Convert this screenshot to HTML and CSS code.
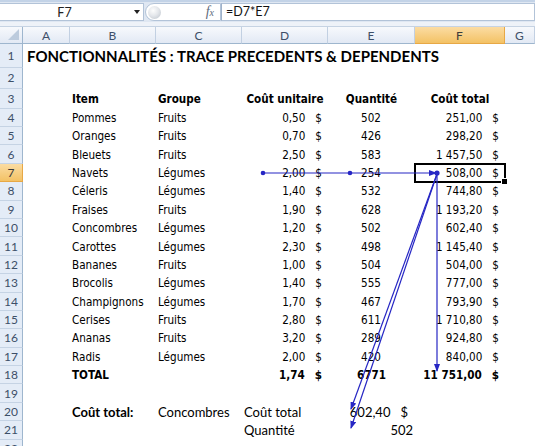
FILE: index.html
```html
<!DOCTYPE html>
<html lang="fr">
<head>
    <meta charset="UTF-8">
    <title>Trace precedents & dependents</title>
    <link rel="stylesheet" href="styles.css">
</head>
<body>

<!-- Formula bar -->
<div class="formula-bar">
    <div class="name-box"><span class="name">F7</span><span class="drop"></span></div>
    <div class="fx-box"><span class="knob"></span><span class="fx">f<span class="fx-x">x</span></span></div>
    <div class="formula">=D7*E7</div>
</div>

<div class="sheet">
    <div class="row head">
        <div class="corner"></div>
        <div class="ch">A</div>
        <div class="ch">B</div>
        <div class="ch">C</div>
        <div class="ch">D</div>
        <div class="ch">E</div>
        <div class="ch sel">F</div>
        <div class="ch">G</div>
    </div>

    <div class="row r1">
        <div class="rh">1</div>
        <div class="title">FONCTIONNALITÉS : TRACE PRECEDENTS &amp; DEPENDENTS</div>
    </div>
    <div class="row r2"><div class="rh">2</div></div>

    <div class="row r3 bold">
        <div class="rh">3</div>
        <div class="c"></div>
        <div class="c">Item</div>
        <div class="c">Groupe</div>
        <div class="c center">Coût unitaire</div>
        <div class="c center">Quantité</div>
        <div class="c center">Coût total</div>
    </div>

    <div class="row"><div class="rh">4</div><div class="c"></div><div class="c">Pommes</div><div class="c">Fruits</div><div class="c money">0,50<span>$</span></div><div class="c qty">502</div><div class="c money">251,00<span>$</span></div></div>
    <div class="row"><div class="rh">5</div><div class="c"></div><div class="c">Oranges</div><div class="c">Fruits</div><div class="c money">0,70<span>$</span></div><div class="c qty">426</div><div class="c money">298,20<span>$</span></div></div>
    <div class="row"><div class="rh">6</div><div class="c"></div><div class="c">Bleuets</div><div class="c">Fruits</div><div class="c money">2,50<span>$</span></div><div class="c qty">583</div><div class="c money">1 457,50<span>$</span></div></div>
    <div class="row"><div class="rh sel">7</div><div class="c"></div><div class="c">Navets</div><div class="c">Légumes</div><div class="c money">2,00<span>$</span></div><div class="c qty">254</div><div class="c money active">508,00<span>$</span></div></div>
    <div class="row"><div class="rh">8</div><div class="c"></div><div class="c">Céleris</div><div class="c">Légumes</div><div class="c money">1,40<span>$</span></div><div class="c qty">532</div><div class="c money">744,80<span>$</span></div></div>
    <div class="row"><div class="rh">9</div><div class="c"></div><div class="c">Fraises</div><div class="c">Fruits</div><div class="c money">1,90<span>$</span></div><div class="c qty">628</div><div class="c money">1 193,20<span>$</span></div></div>
    <div class="row"><div class="rh">10</div><div class="c"></div><div class="c">Concombres</div><div class="c">Légumes</div><div class="c money">1,20<span>$</span></div><div class="c qty">502</div><div class="c money">602,40<span>$</span></div></div>
    <div class="row"><div class="rh">11</div><div class="c"></div><div class="c">Carottes</div><div class="c">Légumes</div><div class="c money">2,30<span>$</span></div><div class="c qty">498</div><div class="c money">1 145,40<span>$</span></div></div>
    <div class="row"><div class="rh">12</div><div class="c"></div><div class="c">Bananes</div><div class="c">Fruits</div><div class="c money">1,00<span>$</span></div><div class="c qty">504</div><div class="c money">504,00<span>$</span></div></div>
    <div class="row"><div class="rh">13</div><div class="c"></div><div class="c">Brocolis</div><div class="c">Légumes</div><div class="c money">1,40<span>$</span></div><div class="c qty">555</div><div class="c money">777,00<span>$</span></div></div>
    <div class="row"><div class="rh">14</div><div class="c"></div><div class="c">Champignons</div><div class="c">Légumes</div><div class="c money">1,70<span>$</span></div><div class="c qty">467</div><div class="c money">793,90<span>$</span></div></div>
    <div class="row"><div class="rh">15</div><div class="c"></div><div class="c">Cerises</div><div class="c">Fruits</div><div class="c money">2,80<span>$</span></div><div class="c qty">611</div><div class="c money">1 710,80<span>$</span></div></div>
    <div class="row"><div class="rh">16</div><div class="c"></div><div class="c">Ananas</div><div class="c">Fruits</div><div class="c money">3,20<span>$</span></div><div class="c qty">289</div><div class="c money">924,80<span>$</span></div></div>
    <div class="row"><div class="rh">17</div><div class="c"></div><div class="c">Radis</div><div class="c">Légumes</div><div class="c money">2,00<span>$</span></div><div class="c qty">420</div><div class="c money">840,00<span>$</span></div></div>

    <div class="row bold">
        <div class="rh">18</div><div class="c"></div><div class="c">TOTAL</div><div class="c"></div>
        <div class="c money">1,74<span>$</span></div><div class="c qty total-qty">6771</div><div class="c money">11 751,00<span>$</span></div>
    </div>

    <div class="row"><div class="rh">19</div></div>

    <div class="row calibri">
        <div class="rh">20</div><div class="c"></div><div class="c strong">Coût total:</div><div class="c">Concombres</div>
        <div class="c">Coût total</div><div class="c money sum">602,40<span>$</span></div>
    </div>
    <div class="row calibri">
        <div class="rh">21</div><div class="c"></div><div class="c"></div><div class="c"></div>
        <div class="c">Quantité</div><div class="c money sum-qty">502</div>
    </div>
    <div class="row"><div class="rh">22</div></div>
</div>

<!-- Tracer arrows drawn over the cells -->
<svg class="tracers" width="535" height="446" viewBox="0 0 535 446">
    <defs>
        <marker id="head" markerUnits="userSpaceOnUse" markerWidth="8" markerHeight="6" refX="7" refY="3" orient="auto">
            <path d="M0,0 L8,3 L0,6 Z" fill="#2626c4"/>
        </marker>
    </defs>
    <g stroke="#2626c4" stroke-width="1.2" fill="none">
        <line x1="263" y1="173" x2="436" y2="173" marker-end="url(#head)"/>
        <line x1="437" y1="173" x2="437" y2="371" marker-end="url(#head)"/>
        <line x1="437" y1="174" x2="351" y2="409" marker-end="url(#head)"/>
        <line x1="437" y1="174" x2="351" y2="428" marker-end="url(#head)"/>
    </g>
    <g fill="#2626c4">
        <circle cx="263" cy="173" r="2.3"/>
        <circle cx="350" cy="173" r="2.3"/>
        <circle cx="437" cy="173" r="2.6"/>
    </g>
</svg>

</body>
</html>
```

FILE: styles.css
```css
body {
    margin: 0;
    background-color: #fff;
    font-family: "DejaVu Sans Condensed", "DejaVu Sans", sans-serif;
    font-size: 11.6px;
    color: #000;
    width: 535px;
    height: 446px;
    overflow: hidden;
    position: relative;
}

/* formula bar */
.formula-bar {
    height: 27px;
    box-sizing: border-box;
    padding-top: 3px;
    background: linear-gradient(#c3d3e7 0, #c3d3e7 2px, #dfe7f2 2px, #dfe7f2 22px, #eef2f8 22px);
    border-bottom: 1px solid #c6d3e3;
    display: flex;
    align-items: flex-start;
}
.name-box {
    width: 144px;
    height: 18px;
    box-sizing: border-box;
    background-color: #fff;
    border: 1px solid #b2c3d8;
    border-left: none;
    display: flex;
    align-items: center;
    font-family: "Lato", sans-serif;
    font-size: 12.5px;
    color: #222;
}
.name {
    width: 129px;
    text-align: center;
}
.drop {
    width: 0;
    height: 0;
    border-left: 3px solid transparent;
    border-right: 3px solid transparent;
    border-top: 4px solid #222;
    margin-left: 5px;
}
.fx-box {
    width: 76px;
    height: 18px;
    box-sizing: border-box;
    margin-left: 1px;
    background-color: #fff;
    border: 1px solid #b2c3d8;
    border-radius: 9px 0 0 9px;
    display: flex;
    align-items: center;
    justify-content: space-between;
    padding: 0 6px 0 2px;
}
.knob {
    width: 13px;
    height: 13px;
    border-radius: 50%;
    background: radial-gradient(circle at 40% 35%, #fdfdfd 0, #e4e7eb 45%, #b9c0c9 100%);
}
.fx {
    font-family: "Liberation Serif", serif;
    font-style: italic;
    font-size: 14px;
    color: #5d6b7c;
}
.fx-x {
    font-size: 10px;
}
.formula {
    flex: 1;
    height: 18px;
    box-sizing: border-box;
    background-color: #fff;
    border: 1px solid #b2c3d8;
    border-left: 1px solid #9fb2ca;
    padding-left: 4px;
    font-family: "Lato", sans-serif;
    font-size: 12.5px;
    color: #111;
    line-height: 16px;
}

/* grid */
.row {
    display: grid;
    grid-template-columns: 23px 47px 86px 86px 86px 87px 90px 1fr;
    height: 18.4px;
    align-items: center;
}
.head { height: 17px; }
.r1 { height: 23.5px; }
.r2 { height: 21.5px; }
.r3 { height: 19.6px; }

.rh, .ch, .corner {
    height: 100%;
    box-sizing: border-box;
    display: flex;
    align-items: center;
    justify-content: center;
    font-family: "Lato", sans-serif;
    font-size: 12px;
    color: #3d4f68;
}
.ch {
    background: linear-gradient(#f7f9fc, #e2e9f4);
    border-right: 1px solid #c2d0e2;
    border-bottom: 1px solid #9eb6ce;
}
.corner {
    background: linear-gradient(#f7f9fc, #e2e9f4);
    border-right: 1px solid #9eb6ce;
    border-bottom: 1px solid #9eb6ce;
    position: relative;
}
.corner::after {
    content: "";
    position: absolute;
    right: 3px;
    bottom: 3px;
    width: 0;
    height: 0;
    border-left: 11px solid transparent;
    border-bottom: 11px solid #bccbdd;
}
.rh {
    background-color: #e4ecf7;
    border-right: 1px solid #9eb6ce;
    border-bottom: 1px solid #c5d3e4;
}
.ch.sel, .rh.sel {
    background: linear-gradient(#fbdca3, #f3c265);
    border-color: #e7a846;
    color: #3b3b3b;
}

/* cells */
.c {
    padding: 0 2px;
    white-space: nowrap;
}
.center { text-align: center; padding: 0; }
.bold .c { font-weight: bold; }
.money {
    display: flex;
    justify-content: flex-end;
    padding-right: 6px;
}
.money span { margin-left: 10px; }
.qty {
    text-align: right;
    padding-right: 34px;
}
.total-qty { padding-right: 29px; }

.title {
    grid-column: 2 / -1;
    padding-left: 4px;
    font-family: "Lato", sans-serif;
    font-weight: bold;
    font-size: 15px;
    color: #000;
    white-space: nowrap;
}

.active {
    position: relative;
    height: 100%;
    box-sizing: border-box;
    align-items: center;
    outline: 2px solid #000;
    outline-offset: -1px;
}
.active::after {
    content: "";
    position: absolute;
    right: -3px;
    bottom: -3px;
    width: 5px;
    height: 5px;
    background-color: #000;
    border: 1px solid #fff;
}

.calibri .c {
    font-family: "Lato", sans-serif;
    font-size: 13px;
}
.calibri .strong { font-weight: bold; }
.sum { padding-right: 7px; }
.sum-qty { padding-right: 2px; }

.tracers {
    position: absolute;
    top: 0;
    left: 0;
    pointer-events: none;
}
```
